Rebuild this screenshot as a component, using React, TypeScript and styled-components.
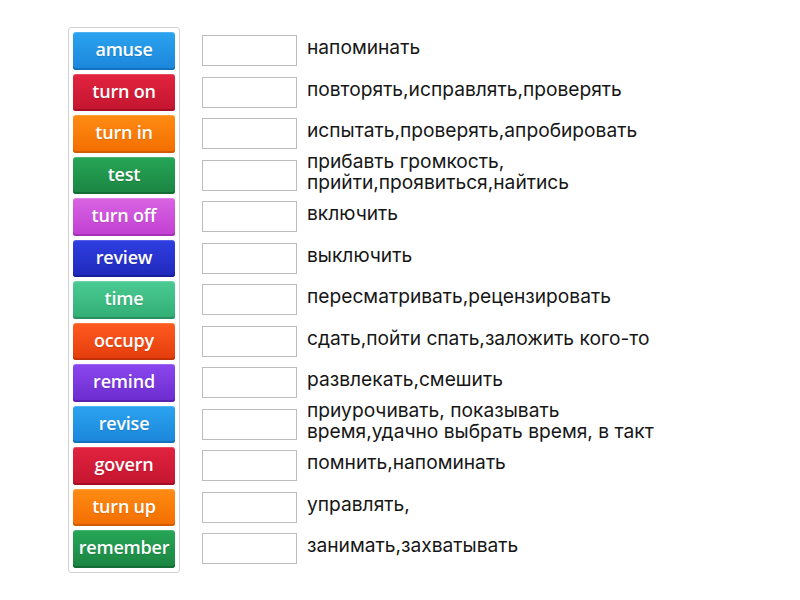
import React from "react";
import styled, { createGlobalStyle } from "styled-components";

const GlobalStyle = createGlobalStyle`
  html, body { margin: 0; padding: 0; background: #ffffff; }
  body { font-family: Inter, Roboto, sans-serif; }
`;

const ROW_H = 37.5;
const GAP = 4;

type Tone = { top: string; bottom: string; edge: string };

const tones: Record<string, Tone> = {
  blue: { top: "#2ba3f0", bottom: "#1b86da", edge: "#1570bd" },
  red: { top: "#e2233f", bottom: "#c3152f", edge: "#a50f26" },
  orange: { top: "#ff8c14", bottom: "#f26d00", edge: "#d45c00" },
  green: { top: "#26a656", bottom: "#1b8442", edge: "#146d35" },
  violet: { top: "#d964e3", bottom: "#c13fd2", edge: "#a52fb5" },
  navy: { top: "#2f3ee2", bottom: "#1f29ba", edge: "#18209c" },
  mint: { top: "#4acb93", bottom: "#31ad74", edge: "#26915f" },
  vermilion: { top: "#ff5b20", bottom: "#e33c0b", edge: "#c23208" },
  purple: { top: "#8b47ef", bottom: "#6b2bcd", edge: "#5822ad" },
};

const items: { word: string; tone: string; def: string[] }[] = [
  { word: "amuse", tone: "blue", def: ["напоминать"] },
  { word: "turn on", tone: "red", def: ["повторять,исправлять,проверять"] },
  { word: "turn in", tone: "orange", def: ["испытать,проверять,апробировать"] },
  { word: "test", tone: "green", def: ["прибавть громкость,", "прийти,проявиться,найтись"] },
  { word: "turn off", tone: "violet", def: ["включить"] },
  { word: "review", tone: "navy", def: ["выключить"] },
  { word: "time", tone: "mint", def: ["пересматривать,рецензировать"] },
  { word: "occupy", tone: "vermilion", def: ["сдать,пойти спать,заложить кого-то"] },
  { word: "remind", tone: "purple", def: ["развлекать,смешить"] },
  { word: "revise", tone: "blue", def: ["приурочивать, показывать", "время,удачно выбрать время, в такт"] },
  { word: "govern", tone: "red", def: ["помнить,напоминать"] },
  { word: "turn up", tone: "orange", def: ["управлять,"] },
  { word: "remember", tone: "green", def: ["занимать,захватывать"] },
];

const Page = styled.div`
  display: flex;
  align-items: flex-start;
  padding: 27px 0 0 68px;
`;

const WordPanel = styled.div`
  display: flex;
  flex-direction: column;
  gap: ${GAP}px;
  padding: 4px;
  border: 1px solid #d2d2d2;
  border-radius: 3px;
`;

const WordTile = styled.div<{ $tone: Tone }>`
  width: 102px;
  height: ${ROW_H}px;
  box-sizing: border-box;
  display: flex;
  align-items: center;
  justify-content: center;
  border-radius: 3px;
  background: linear-gradient(to bottom, ${(p) => p.$tone.top}, ${(p) => p.$tone.bottom});
  box-shadow: inset 0 -2px 0 ${(p) => p.$tone.edge}, inset 0 1px 0 rgba(255,255,255,0.18);
  color: #ffffff;
  font-family: "Open Sans", Lato, sans-serif;
  font-weight: 600;
  font-size: 18px;
  letter-spacing: -0.2px;
  padding-bottom: 3px;
  text-shadow: 0 1px 1px rgba(0,0,0,0.12);
`;

const Rows = styled.div`
  display: flex;
  flex-direction: column;
  gap: ${GAP}px;
  padding-top: 5px;
  margin-left: 22px;
`;

const Row = styled.div`
  height: ${ROW_H}px;
  display: flex;
  align-items: center;
`;

const Slot = styled.div`
  width: 95px;
  height: 31px;
  box-sizing: border-box;
  border: 1px solid #bcbcbc;
  background: #ffffff;
  flex-shrink: 0;
`;

const Definition = styled.div`
  margin-left: 10px;
  margin-bottom: 6px;
  font-family: Inter, Roboto, sans-serif;
  font-size: 19.2px;
  line-height: 21px;
  color: #161616;
  white-space: nowrap;
`;

export default function App() {
  return (
    <>
      <GlobalStyle />
      <Page>
        <WordPanel>
          {items.map((it) => (
            <WordTile key={it.word} $tone={tones[it.tone]}>
              {it.word}
            </WordTile>
          ))}
        </WordPanel>
        <Rows>
          {items.map((it) => (
            <Row key={it.word}>
              <Slot />
              <Definition>
                {it.def.map((l, i) => (
                  <div key={i}>{l}</div>
                ))}
              </Definition>
            </Row>
          ))}
        </Rows>
      </Page>
    </>
  );
}
